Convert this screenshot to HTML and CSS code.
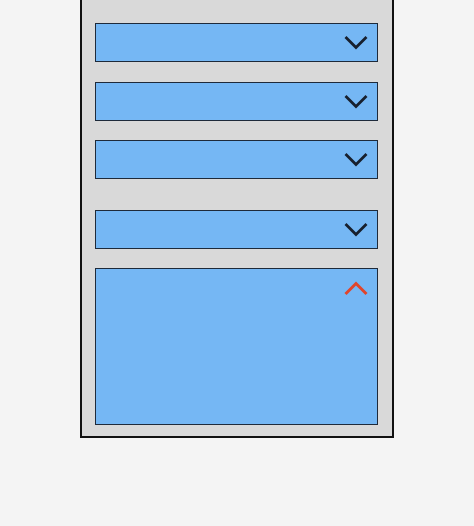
FILE: index.html
```html
<!DOCTYPE html>
<html>
<head>
<meta charset="utf-8">
<link rel="stylesheet" href="styles.css">
</head>
<body>
<div class="panel">
  <div class="item"><svg class="chev" viewBox="0 0 24 15" width="24" height="15"><polyline points="1.5,2 12,12.5 22.5,2"/></svg></div>
  <div class="item"><svg class="chev" viewBox="0 0 24 15" width="24" height="15"><polyline points="1.5,2 12,12.5 22.5,2"/></svg></div>
  <div class="item"><svg class="chev" viewBox="0 0 24 15" width="24" height="15"><polyline points="1.5,2 12,12.5 22.5,2"/></svg></div>
  <div class="item item-sep"><svg class="chev" viewBox="0 0 24 15" width="24" height="15"><polyline points="1.5,2 12,12.5 22.5,2"/></svg></div>
  <div class="item item-open"><svg class="chev chev-up" viewBox="0 0 24 15" width="24" height="15"><polyline points="1.5,13 12,2.5 22.5,13"/></svg></div>
</div>
</body>
</html>
```

FILE: styles.css
```css
html, body {
  margin: 0;
  padding: 0;
  background: #f4f4f4;
}
.panel {
  box-sizing: border-box;
  width: 314px;
  margin: -2px 0 0 80px;
  border: 2px solid #111;
  background: #d9d9d9;
  padding: 23px 14px 11px 13px;
  display: flex;
  flex-direction: column;
  gap: 19.5px;
}
.item {
  box-sizing: border-box;
  height: 39px;
  background: #75b7f4;
  border: 1px solid #1e2a3a;
  display: flex;
  align-items: center;
  justify-content: flex-end;
  padding-right: 9px;
}
.item-sep {
  margin-top: 11px;
}
.item-open {
  height: 157px;
  align-items: flex-start;
  padding-top: 12px;
}
.chev {
  display: block;
  fill: none;
  stroke: #17202e;
  stroke-width: 2.8;
  stroke-linecap: butt;
  stroke-linejoin: miter;
}
.chev-up {
  stroke: #e0452c;
  stroke-width: 3;
}
```
